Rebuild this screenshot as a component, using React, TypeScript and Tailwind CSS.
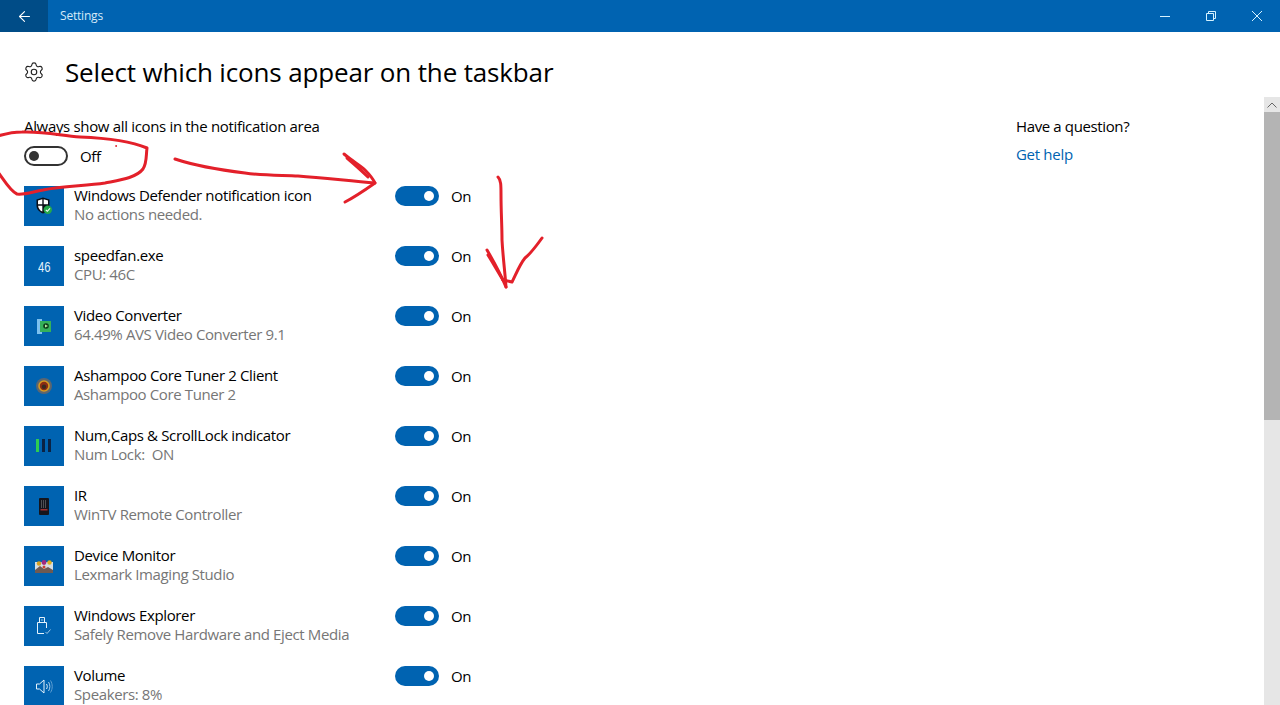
import { Settings, ArrowLeft } from "lucide-react";
import type { ReactNode } from "react";

const font = "font-['Open_Sans','Noto_Sans',sans-serif]";

function ShieldIcon() {
  return (
    <svg width="18" height="18" viewBox="0 0 18 18">
      <path d="M8 0.5 L14.5 2.5 V8.5 C14.5 12.5 11.5 15 8 16.5 C4.5 15 1.5 12.5 1.5 8.5 V2.5 Z" fill="#0a0f16" />
      <path d="M7.3 2.2 V7.3 H3 V3.5 Z M8.7 2.2 L13 3.5 V7.3 H8.7 Z M3.1 8.7 H7.3 V14.6 C5 13.6 3.4 11.5 3.1 8.7 Z" fill="#fff" />
      <circle cx="12.8" cy="12.8" r="4.2" fill="#25a84a" />
      <path d="M10.8 12.8 L12.3 14.3 L15 11.4" stroke="#fff" strokeWidth="1.1" fill="none" />
    </svg>
  );
}

function VideoIcon() {
  return (
    <svg width="14" height="17" viewBox="0 0 14 17">
      <rect x="0" y="1" width="5" height="15" fill="#7cc0ee" />
      <rect x="3" y="3" width="11" height="11" fill="#35b05a" />
      <circle cx="9" cy="8" r="2.8" fill="#0c3b18" />
      <path d="M8 6.5 L11 8 L8 9.5 Z" fill="#b6f0a0" />
    </svg>
  );
}

function GaugeIcon() {
  return (
    <svg width="16" height="16" viewBox="0 0 16 16">
      <circle cx="8" cy="8" r="8" fill="#5c6670" />
      <circle cx="8" cy="8" r="5.8" fill="#d89a20" />
      <circle cx="8" cy="8" r="4.2" fill="#8a2c14" />
      <circle cx="8" cy="8.8" r="2.2" fill="#3a2a20" />
    </svg>
  );
}

function LocksIcon() {
  return (
    <svg width="16" height="14" viewBox="0 0 16 14">
      <rect x="0" y="0" width="3" height="13" fill="#2ecc50" />
      <rect x="6" y="0" width="3" height="13" fill="#0b2344" />
      <rect x="12" y="0" width="3" height="13" fill="#0b2344" />
    </svg>
  );
}

function RemoteIcon() {
  return (
    <svg width="10" height="17" viewBox="0 0 10 17">
      <rect x="0" y="0" width="10" height="17" rx="1" fill="#15151c" />
      <path d="M2 3 H8 M2 5 H8 M2 7 H8 M2 9 H8" stroke="#aaa" strokeWidth="0.8" strokeDasharray="1 1" />
      <rect x="1.5" y="11" width="7" height="1.5" fill="#a03030" />
    </svg>
  );
}

function PrinterIcon() {
  return (
    <svg width="18" height="15" viewBox="0 0 18 15">
      <rect x="0" y="3" width="18" height="11" fill="#d5dde2" />
      <path d="M0 11 L5 7 L9 10 L13 8 L18 11 V14 H0 Z" fill="#6f5a52" />
      <circle cx="4" cy="4.5" r="2.2" fill="#d6a020" />
      <circle cx="9" cy="3.5" r="2.4" fill="#a02a80" />
      <circle cx="14.5" cy="3.5" r="2.2" fill="#e0b020" />
      <circle cx="9" cy="8" r="1.5" fill="#d04030" />
    </svg>
  );
}

function UsbIcon() {
  return (
    <svg width="16" height="18" viewBox="0 0 16 18" fill="none" stroke="#e4f2fb" strokeWidth="1">
      <path d="M3.5 5.5 V0.5 H8.5 V5.5" />
      <path d="M5 3 H5.8 M6.4 3 H7.2" />
      <path d="M1.5 5.5 H10.5 V11 M1.5 5.5 V16.5 H8" />
      <path d="M9.5 15 L11 16.5 L14.5 12.5" stroke="#9cc6e6" />
    </svg>
  );
}

function SpeakerIcon() {
  return (
    <svg width="17" height="17" viewBox="0 0 17 17" fill="none" stroke="#e4f2fb" strokeWidth="1">
      <path d="M0.5 6 H3.5 L8 2 V15 L3.5 11 H0.5 Z" />
      <path d="M10.5 6 C11.5 7.5 11.5 9.5 10.5 11" />
      <path d="M12.5 4 C14.3 6.5 14.3 10.5 12.5 13" stroke="#a8cdea" />
      <path d="M14.5 2.5 C16.8 6 16.8 11 14.5 14.5" stroke="#5f9fd2" />
    </svg>
  );
}

const rows: { name: string; sub: string; icon: ReactNode }[] = [
  { name: "Windows Defender notification icon", sub: "No actions needed.", icon: <ShieldIcon /> },
  {
    name: "speedfan.exe",
    sub: "CPU: 46C",
    icon: <span className="font-['Liberation_Sans',sans-serif] text-[15px] leading-none text-[#e4f2fb] scale-x-75">46</span>,
  },
  { name: "Video Converter", sub: "64.49% AVS Video Converter 9.1", icon: <VideoIcon /> },
  { name: "Ashampoo Core Tuner 2 Client", sub: "Ashampoo Core Tuner 2", icon: <GaugeIcon /> },
  { name: "Num,Caps & ScrollLock indicator", sub: "Num Lock:  ON", icon: <LocksIcon /> },
  { name: "IR", sub: "WinTV Remote Controller", icon: <RemoteIcon /> },
  { name: "Device Monitor", sub: "Lexmark Imaging Studio", icon: <PrinterIcon /> },
  { name: "Windows Explorer", sub: "Safely Remove Hardware and Eject Media", icon: <UsbIcon /> },
  { name: "Volume", sub: "Speakers: 8%", icon: <SpeakerIcon /> },
];

function OnToggle() {
  return (
    <div className="flex h-5 items-center">
      <div className="flex h-5 w-11 items-center justify-end rounded-full bg-[#0063b1] pr-[5px]">
        <div className="h-[10px] w-[10px] rounded-full bg-white" />
      </div>
      <span className="ml-3 text-[15px] leading-5 tracking-[-0.35px] text-black">On</span>
    </div>
  );
}

function Row({ name, sub, icon }: { name: string; sub: string; icon: ReactNode }) {
  return (
    <div className="flex h-10 shrink-0">
      <div className="flex h-10 w-10 shrink-0 items-center justify-center bg-[#0063b1]">{icon}</div>
      <div className="w-[331px] pl-[10px]">
        <div className="text-[15px] leading-[18px] tracking-[-0.35px] text-black whitespace-nowrap">{name}</div>
        <div className="text-[15px] leading-[21px] tracking-[-0.38px] text-[#767676] whitespace-pre">{sub}</div>
      </div>
      <OnToggle />
    </div>
  );
}

// red marker scribbles drawn over the page
function Scribbles() {
  return (
    <svg className="absolute left-0 top-0 pointer-events-none" width="1280" height="705" fill="none" stroke="#e3202a" strokeWidth="3" strokeLinecap="round" strokeLinejoin="round">
      <path d="M-2 136 C8 133 14 132 22 132 C45 131 62 136 80 137 C105 138 128 140 147 148 C146 155 147 163 143 169 C136 178 120 180 105 183 C85 186 62 186 43 190 C32 192 24 195 17 194 C10 191 4 180 -2 172" />
      <path d="M175 159 C190 164 220 170 245 173 C265 176 285 175 298 176 C325 178 350 181 375 183" />
      <path d="M344 154 C352 161 360 165 365 170 C370 175 373 179 375 183 C365 190 355 197 345 202" />
      <path d="M347 158 C354 164 362 171 368 177" />
      <path d="M498 177 C501 180 501 185 501 195 C501 212 502 225 502 240 C503 258 505 272 506 287" />
      <path d="M487 250 C494 262 501 275 506 287" />
      <path d="M488 255 C493 263 498 272 503 280" />
      <path d="M503 280 L512 282 C516 274 520 264 525 258 C530 254 537 245 542 238" />
      <circle cx="116" cy="146" r="0.5" strokeWidth="1" />
    </svg>
  );
}

export default function App() {
  return (
    <div className={`${font} relative flex h-[705px] w-[1280px] flex-col overflow-hidden bg-white`}>
      {/* title bar */}
      <div className="flex h-8 shrink-0 items-center bg-[#0063b1] text-[#d5eaf8]">
        <div className="flex h-8 w-12 items-center justify-center bg-[#004c87]">
          <ArrowLeft size={17} strokeWidth={1.5} color="#fff" />
        </div>
        <span className="ml-3 text-[12px] tracking-[-0.2px]">Settings</span>
        <div className="ml-auto flex h-8">
          <div className="flex w-[46px] items-center justify-center">
            <svg width="10" height="10" viewBox="0 0 10 10" stroke="#d5f2ff"><path d="M0 5.5 H10" /></svg>
          </div>
          <div className="flex w-[46px] items-center justify-center">
            <svg width="10" height="10" viewBox="0 0 10 10" fill="none" stroke="#d5f2ff"><path d="M0.5 2.5 H7.5 V9.5 H0.5 Z M2.5 2.5 V0.5 H9.5 V7.5 H7.5" /></svg>
          </div>
          <div className="flex w-[46px] items-center justify-center">
            <svg width="10" height="10" viewBox="0 0 10 10" stroke="#d5f2ff"><path d="M0 0 L10 10 M10 0 L0 10" /></svg>
          </div>
        </div>
      </div>

      <div className="flex min-h-0 flex-1">
        <div className="flex-1">
          {/* page heading */}
          <div className="flex h-20 items-center pl-[23px]">
            <Settings size={22} strokeWidth={1.25} color="#222" />
            <h1 className="ml-[20px] text-[26px] font-normal tracking-[-0.15px] text-black">Select which icons appear on the taskbar</h1>
          </div>

          <div className="flex">
            <div className="w-[1016px] pl-6 pt-1">
              <div className="text-[15px] leading-5 tracking-[-0.33px] text-black">Always show all icons in the notification area</div>
              <div className="mt-[10px] flex h-5 items-center">
                <div className="flex h-5 w-11 items-center rounded-full border-2 border-[#333] pl-[3px]">
                  <div className="h-[10px] w-[10px] rounded-full bg-[#333]" />
                </div>
                <span className="ml-3 text-[15px] leading-5 tracking-[-0.35px] text-black">Off</span>
              </div>
              <div className="mt-5 flex flex-col gap-5">
                {rows.map((r) => (
                  <Row key={r.name} name={r.name} sub={r.sub} icon={r.icon} />
                ))}
              </div>
            </div>
            <div className="pt-1">
              <div className="text-[15px] leading-5 tracking-[-0.37px] text-black">Have a question?</div>
              <div className="mt-2 text-[15px] leading-5 tracking-[-0.3px] text-[#0063b1]">Get help</div>
            </div>
          </div>
        </div>

        {/* scrollbar */}
        <div className="mt-[65px] flex w-4 shrink-0 flex-col bg-[#e6e6e6]">
          <div className="flex h-[15px] items-center justify-center">
            <svg width="10" height="6" viewBox="0 0 10 6" fill="none" stroke="#666"><path d="M0.5 5.5 L5 1 L9.5 5.5" /></svg>
          </div>
          <div className="h-[308px] bg-[#b4b4b4]" />
        </div>
      </div>

      <Scribbles />
    </div>
  );
}
